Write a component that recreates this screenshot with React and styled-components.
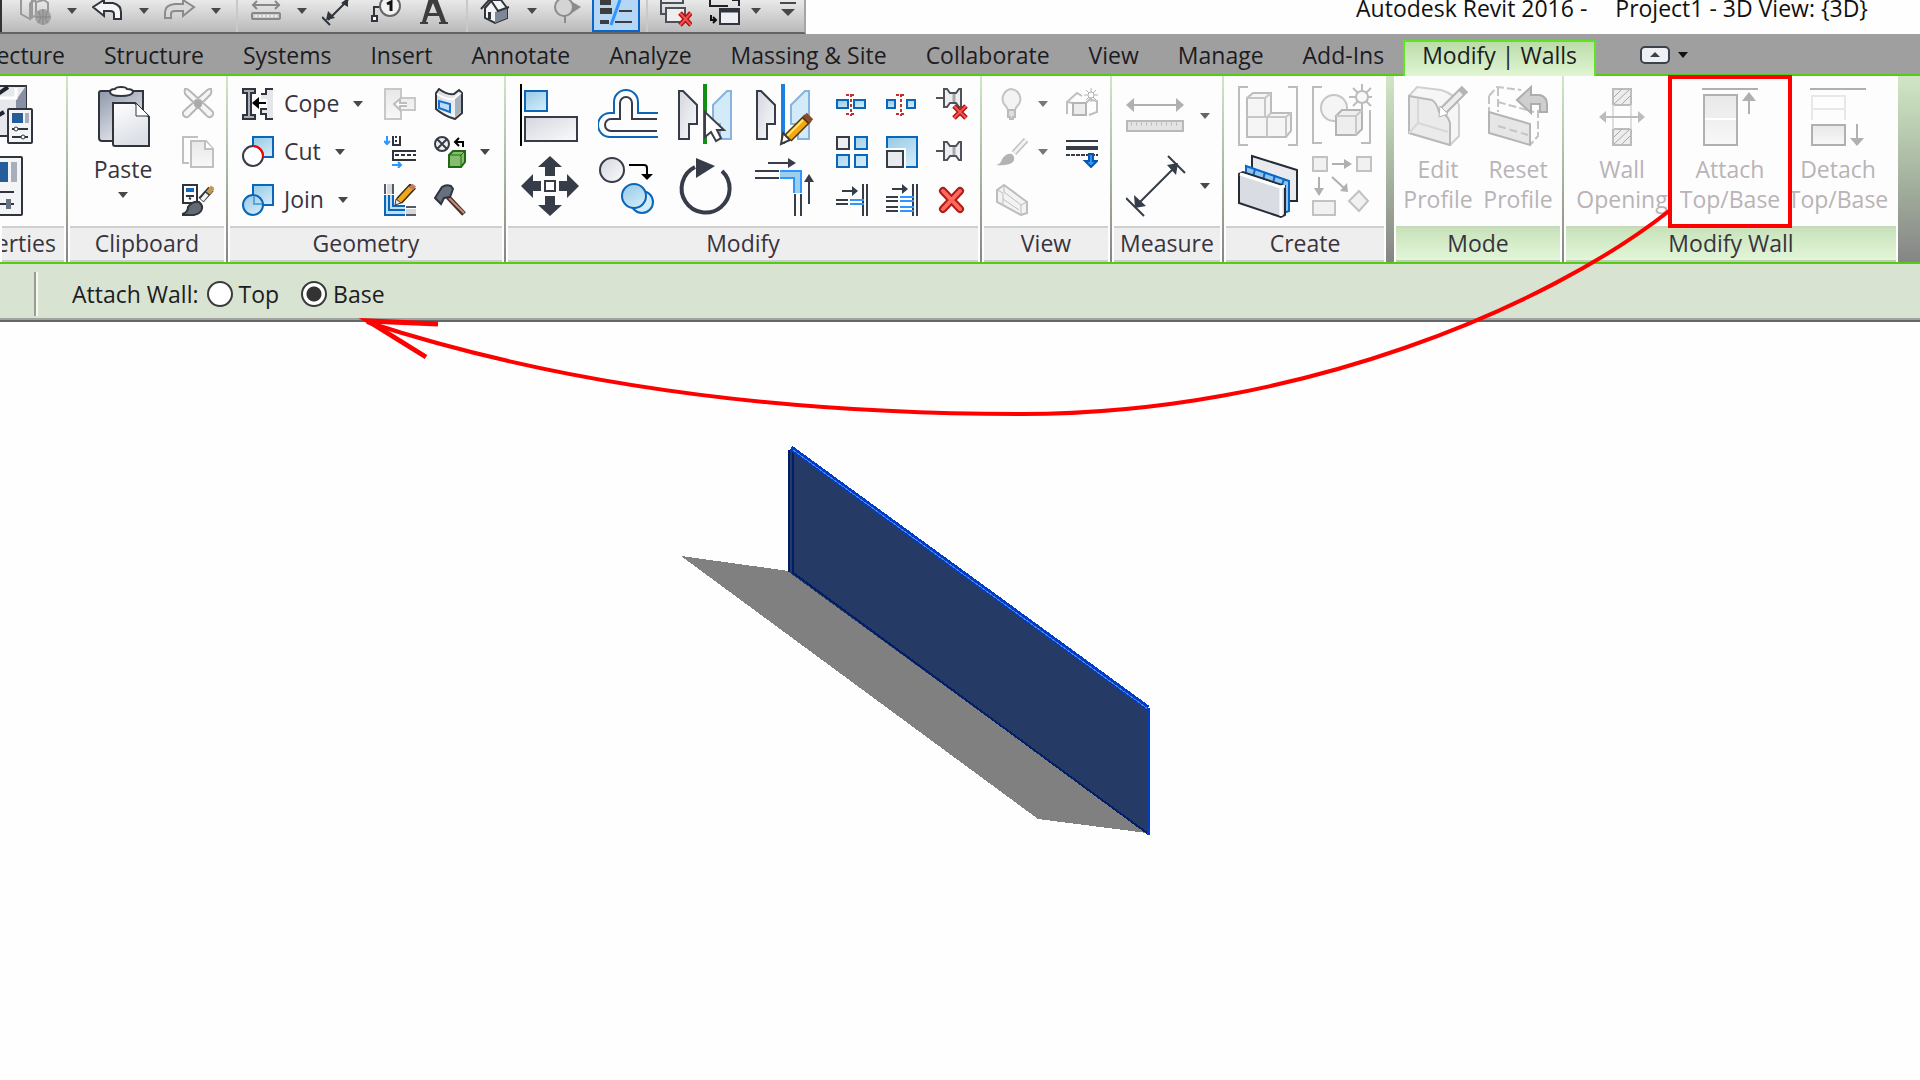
import { useState } from 'react';
import styled, { createGlobalStyle, css } from 'styled-components';

const GlobalStyle = createGlobalStyle`
  :root {
    --ink: #363c48;
    --blue: #0a66b8;
    --lime: #55cc14;
    --disabled: #b9b3b8;
    --options: #d8e3d1;
  }
  body {
    margin: 0;
    background: #fefefe;
    font-family: 'Open Sans', 'Noto Sans', sans-serif;
    font-size: 23px;
    line-height: 30px;
    color: #1c1c22;
    overflow-x: hidden;
  }
  button {
    font: inherit;
    color: inherit;
    background: none;
    border: 0;
    padding: 0;
  }
  svg {
    display: block;
    flex: none;
  }
`;

const Page = styled.div`
  position: relative;
  min-height: 100vh;
  overflow: hidden;
`;

const TopRow = styled.header`
  display: flex;
  justify-content: space-between;
  height: 34px;
`;

const QuickAccess = styled.div`
  display: flex;
  height: 32px;
  padding-left: 20px;
  background: linear-gradient(#e9e9e9, #b9b9b9);
  border-bottom: 2px solid #636363;
  border-right: 2px solid #a5a5a5;
  box-shadow: inset 2px 0 0 #333;
`;

const QuickButton = styled.button`
  display: flex;
  justify-content: center;
  width: ${(props) => props.$width || 32}px;
  height: 32px;
  margin-right: ${(props) => props.$after || 0}px;
  ${(props) =>
    props.$on &&
    css`
      box-sizing: border-box;
      background: #b5d6f5;
      border: 2px solid #0a66c8;
      border-top: 0;
    `}
`;

const QuickDivider = styled.div`
  width: 2px;
  margin: 0 12px 0 ${(props) => (props.$tight ? 6 : 0)}px;
  background: #c9c9c9;
`;

const WindowTitle = styled.div`
  display: flex;
  gap: 28px;
  padding-right: 52px;
  line-height: 16px;
  color: #111;
  white-space: nowrap;
`;

const TabBar = styled.nav`
  display: flex;
  align-items: flex-end;
  height: 40px;
  background: #9f9f9f;
  border-bottom: 2px solid var(--lime);
`;

const Tab = styled.button`
  box-sizing: border-box;
  height: 34px;
  padding: 0 19px 4px 20px;
  line-height: 30px;
  white-space: nowrap;
  ${(props) =>
    props.$clipped &&
    css`
      display: flex;
      justify-content: flex-end;
      width: 84px;
      overflow: hidden;
    `}
  ${(props) =>
    props.$active &&
    css`
      height: 36px;
      margin-bottom: -2px;
      padding: 0 17px 8px;
      background: linear-gradient(#bcdcaa, #e0f6d3);
      border: 2px solid #5fe51e;
      border-bottom: 0;
      line-height: 26px;
    `}
`;

const CollapseButton = styled.button`
  display: flex;
  align-items: center;
  gap: 8px;
  height: 38px;
  margin-left: 44px;
`;

const Ribbon = styled.section`
  display: flex;
  gap: 2px;
  height: 186px;
  background: linear-gradient(#d0e7c5, #a9b8a2 50%, #858585);
  border-bottom: 2px solid var(--lime);
`;

const PanelBox = styled.div`
  display: flex;
  flex-direction: column;
  flex: none;
  width: ${(props) => props.$width}px;
  margin-right: ${(props) => props.$after || 0}px;
  background: #fdfdfd;
`;

const PanelBody = styled.div`
  display: flex;
  justify-content: ${(props) => (props.$clipped ? 'flex-end' : 'flex-start')};
  box-sizing: border-box;
  height: 150px;
  padding: 8px 0 0 ${(props) => props.$left}px;
`;

const PanelTitle = styled.div`
  display: flex;
  justify-content: ${(props) => (props.$clipped ? 'flex-end' : 'center')};
  box-sizing: border-box;
  height: 36px;
  margin: 0 2px;
  padding-right: ${(props) => (props.$clipped ? 8 : 0)}px;
  overflow: hidden;
  line-height: 30px;
  color: #38343f;
  background: ${(props) =>
    props.$context ? 'linear-gradient(#c9e2bb, #e2f6d8)' : '#eeeeee'};
  border-top: 2px solid ${(props) => (props.$context ? '#c6d9bb' : '#cfcfcf')};
  border-bottom: 2px solid ${(props) => (props.$context ? '#bccbb3' : '#cccccc')};
`;

const SmallColumn = styled.div`
  display: flex;
  flex-direction: column;
  gap: 16px;
  width: ${(props) => props.$width || 32}px;
  margin-right: ${(props) => props.$after || 0}px;
  padding-top: 4px;
`;

const ToolButton = styled.button`
  display: flex;
  align-items: center;
  gap: ${(props) => props.$gap || 10}px;
  height: 32px;
  white-space: nowrap;
  color: #38343f;
  span {
    margin-right: 4px;
    padding-bottom: 2px;
  }
`;

const LargeGrid = styled.div`
  display: grid;
  grid-template-columns: repeat(${(props) => props.$columns}, 60px);
  grid-auto-rows: 64px;
  gap: 6px ${(props) => props.$gap || 14}px;
  margin-right: ${(props) => props.$after || 0}px;
`;

const WideButton = styled.button`
  display: flex;
  align-items: center;
  gap: 14px;
  height: 64px;
`;

const WideColumn = styled.div`
  display: flex;
  flex-direction: column;
  gap: 6px;
`;

const LabelButton = styled.button`
  display: flex;
  flex-direction: column;
  align-items: center;
  flex: none;
  height: 142px;
  width: ${(props) => props.$width}px;
  margin-right: ${(props) => props.$after || 0}px;
  color: ${(props) => (props.disabled ? 'var(--disabled)' : '#38343f')};
  span {
    white-space: nowrap;
  }
  svg + span {
    margin-top: 6px;
  }
  span + svg {
    margin-top: 8px;
  }
`;

const OptionsBar = styled.section`
  display: flex;
  align-items: center;
  box-sizing: border-box;
  height: 58px;
  padding-top: 4px;
  background: var(--options);
  border-bottom: 2px solid #666;
  box-shadow: inset 0 -2px 0 #a0a39e;
`;

const OptionsDivider = styled.div`
  width: 2px;
  height: 44px;
  margin: 0 34px 0 34px;
  background: #979c94;
  border-right: 2px solid #f4f7f2;
`;

const OptionsLabel = styled.span`
  margin-right: 8px;
  white-space: nowrap;
`;

const RadioLabel = styled.label`
  display: flex;
  align-items: center;
  gap: 6px;
  margin-right: 22px;
  input {
    appearance: none;
    box-sizing: border-box;
    width: 26px;
    height: 26px;
    margin: 0;
    background: #fff;
    border: 2px solid #3a3a3a;
    border-radius: 50%;
  }
  input:checked {
    background: radial-gradient(circle, #333 0 7px, #fff 8px);
  }
`;

const Scene = styled.svg`
  width: 100%;
  height: auto;
`;

const Markup = styled.svg`
  position: absolute;
  top: 0;
  left: 0;
  width: 100%;
  height: auto;
  pointer-events: none;
`;

function Icon({ w = 32, h = 32, children }) {
  return (
    <svg width={w} height={h} viewBox={`0 0 ${w} ${h}`} fill="none" aria-hidden="true">
      {children}
    </svg>
  );
}

const Caret = ({ color = '#484848' }) => (
  <Icon w={10} h={6}>
    <path d="M0 0h10L5 6z" fill={color} />
  </Icon>
);

const DefsSvg = styled.svg`
  position: absolute;
`;

const Gradients = () => (
  <DefsSvg width="0" height="0" aria-hidden="true">
    <defs>
      <linearGradient id="steel" x1="0" y1="0" x2="0.6" y2="1">
        <stop offset="0" stopColor="#8e98aa" />
        <stop offset="1" stopColor="#e8eaef" />
      </linearGradient>
      <linearGradient id="paper" x1="0" y1="0" x2="0.4" y2="1">
        <stop offset="0" stopColor="#ffffff" />
        <stop offset="1" stopColor="#dcdfe6" />
      </linearGradient>
      <linearGradient id="silver" x1="0" y1="0" x2="1" y2="1">
        <stop offset="0" stopColor="#d3d6dd" />
        <stop offset="1" stopColor="#fbfbfc" />
      </linearGradient>
      <linearGradient id="sky" x1="0" y1="0" x2="0.6" y2="1">
        <stop offset="0" stopColor="#95c9e6" />
        <stop offset="1" stopColor="#cde9f8" />
      </linearGradient>
      <linearGradient id="haze" x1="0" y1="0" x2="0" y2="1">
        <stop offset="0" stopColor="#e8e8e8" />
        <stop offset="1" stopColor="#f8f8f8" />
      </linearGradient>
    </defs>
  </DefsSvg>
);

/* quick access icons, cut off by the top edge of the window */

const SyncIcon = () => (
  <Icon>
    <path d="M1 0v14l9 5V3M10 19l6-4M10 3l6-3M12 0v18M16 15V2l8-2M24 0l4 3v8" stroke="#9a9a9a" strokeWidth="2" />
    <circle cx="23" cy="17" r="8" fill="#a2a2a2" />
    <path d="M15 17h16M23 9v16M18 11c3 4 3 9 0 12M28 11c-3 4-3 9 0 12" stroke="#858585" />
  </Icon>
);

const UndoIcon = ({ redo }) => (
  <Icon>
    <path
      d={redo ? 'M30 7 19 0v4h-8Q1 5 1 12v6h6v-4q0-3 4-3h8v5z' : 'M1 7 12 0v3h9q8 2 8 9v7h-7v-5q0-3-4-3h-6v5z'}
      fill={redo ? '#d9d9d9' : '#f4f5f8'}
      stroke={redo ? '#8b8b8b' : '#30343d'}
      strokeWidth="2"
    />
  </Icon>
);

const RulerIcon = () => (
  <Icon>
    <path d="M2 5h28M7 1 3 5l4 4M25 1l4 4-4 4" stroke="#888" strokeWidth="2" />
    <rect x="2" y="13" width="28" height="6" rx="1" fill="#ccc" stroke="#888" strokeWidth="2" />
    <path d="M5 16h23" stroke="#eee" strokeWidth="2" strokeDasharray="2 2" />
  </Icon>
);

const DimensionIcon = () => (
  <Icon>
    <path d="m6 20 20-20M0 17l8 8" stroke="#30343d" strokeWidth="2" />
    <path d="m4 20 2-9 7 7zM19 3l7-5v9z" fill="#30343d" />
  </Icon>
);

const TagIcon = () => (
  <Icon>
    <path d="M4 16V7h8" stroke="#30343d" strokeWidth="2" />
    <rect x="2" y="16" width="5" height="5" fill="#fff" stroke="#30343d" strokeWidth="2" />
    <circle cx="20" cy="6" r="10" fill="#f2f2f2" stroke="#666" strokeWidth="2" />
    <path d="m17 4 4-2v9" stroke="#111" strokeWidth="3" />
  </Icon>
);

const TextIcon = () => (
  <Icon>
    <path d="M11-2h8l9 24h2v2h-9v-2h2l-2-6H10l-2 6h2v2H2v-2h2zM15 3l-4 10h8z" fill="#3d3d3d" fillRule="evenodd" />
  </Icon>
);

const HomeIcon = () => (
  <Icon>
    <path d="M5 8v10l10 5 12-5V8L21 0h-9z" fill="#f3f4f6" stroke="#30343d" strokeWidth="2" />
    <path d="M15 12v11l12-5V8z" fill="#7e8795" />
    <path d="M1 9 10-1l8 12 11-4" stroke="#30343d" strokeWidth="2" />
    <path d="M8 12h3v7H8z" fill="#30343d" />
  </Icon>
);

const SectionIcon = () => (
  <Icon>
    <path d="M17 0 29 7 17 15z" fill="#8b8b8b" />
    <circle cx="12" cy="7" r="9" fill="#d4d4d4" stroke="#8b8b8b" strokeWidth="2" />
    <path d="M13 16v7" stroke="#8b8b8b" strokeWidth="2" />
  </Icon>
);

const ThinLinesIcon = () => (
  <Icon>
    <path d="M0 2h11M0 11h12" stroke="#3d3d3d" strokeWidth="6" />
    <path d="M0 22h9" stroke="#3d3d3d" strokeWidth="4" />
    <path d="M19 11h13M15 22h17" stroke="#3d3d3d" strokeWidth="2" />
    <path d="m20 0-9 25" stroke="#2f95ff" strokeWidth="3" />
  </Icon>
);

const CloseHiddenIcon = () => (
  <Icon>
    <path d="M1 0v14h6M1 3h22V0" fill="none" stroke="#4c505a" strokeWidth="2" />
    <rect x="6" y="8" width="19" height="14" fill="#eee" stroke="#4c505a" strokeWidth="2" />
    <path d="m20 13 11 12M31 13 20 25" stroke="#b31313" strokeWidth="5" />
    <path d="m20 13 11 12M31 13 20 25" stroke="#ef5350" strokeWidth="2" />
  </Icon>
);

const SwitchWindowsIcon = () => (
  <Icon>
    <path d="M2 0v6h18M24 0h7v6" stroke="#222" strokeWidth="2" />
    <rect x="12" y="9" width="19" height="15" fill="#eeeff2" stroke="#30343d" strokeWidth="2" />
    <path d="M12 11h19" stroke="#30343d" strokeWidth="3" />
    <path d="M3 15v5h5M5 17l3 3-3 3" stroke="#111" strokeWidth="2" />
  </Icon>
);

const CustomizeIcon = () => (
  <Icon>
    <path d="M8 3h16" stroke="#484848" strokeWidth="2" />
    <path d="M9 9h14l-7 7z" fill="#484848" />
  </Icon>
);

/* ribbon icons */

const PropertiesIcon = () => (
  <Icon w={60} h={64}>
    <path d="M4 14 26 2h26v36l-10 14H4z" fill="#e6e8ec" stroke="#30343d" strokeWidth="2" />
    <path d="M52 2 42 16v30l10-12z" fill="#8791a3" />
    <path d="M4 14h38V4" stroke="#fff" strokeWidth="3" />
    <path d="m24 10 10-7M20 34l10-6" stroke="#20242c" strokeWidth="4" />
    <rect x="34" y="25" width="24" height="34" rx="1" fill="#f3f4f6" stroke="#30343d" strokeWidth="2" />
    <path d="M38 29h11v10H38z" fill="#245c9c" />
    <path d="M51 29h4v10h-4z" fill="#a9afba" />
    <path d="M38 45h16M38 53h16" stroke="#30343d" strokeWidth="2" />
    <circle cx="42" cy="45" r="2" fill="#fff" stroke="#30343d" />
    <circle cx="49" cy="53" r="2" fill="#fff" stroke="#30343d" />
  </Icon>
);

const TypePropertiesIcon = () => (
  <Icon w={60} h={64}>
    <rect x="6" y="3" width="42" height="58" rx="1" fill="#f3f4f6" stroke="#30343d" strokeWidth="2" />
    <path d="M12 8h22v20H12z" fill="#245c9c" />
    <path d="M37 8h6v20h-6z" fill="#a9afba" />
    <path d="M12 38h28M12 50h28" stroke="#30343d" strokeWidth="2" />
    <path d="M32 45h5v10h-5z" fill="#687386" />
  </Icon>
);

const PasteIcon = () => (
  <Icon w={60} h={64}>
    <path d="M8 7h42v47q-1 3-3 3H9q-3 0-3-3V9q0-2 2-2z" fill="url(#steel)" stroke="#30343d" strokeWidth="2" />
    <path d="M17 8q0-3 5-3 1-2 6-2t6 2q6 0 6 3-1 4-12 4T17 8z" fill="#fff" stroke="#30343d" strokeWidth="2" />
    <path d="M20 19h22l14 14v29H22q-2 0-2-2z" fill="url(#paper)" stroke="#30343d" strokeWidth="2" />
    <path d="M43 19v13h13z" fill="#fff" stroke="#30343d" strokeWidth="1" />
  </Icon>
);

const ScissorsIcon = () => (
  <Icon>
    <path d="M3 1q-1 4 1 6l20 20q3 4 6 1t-1-6L9 4Q5 0 3 1zM29 1q1 4-1 6L8 27q-3 4-6 1t1-6L23 4q4-4 6-3z" fill="#f5f5f5" stroke="#b7b7b7" strokeWidth="2" />
    <circle cx="16" cy="16" r="4" fill="#aaa" />
  </Icon>
);

const CopyIcon = () => (
  <Icon>
    <path d="M16 1H1v26h6" stroke="#c0c0c0" strokeWidth="2" />
    <path d="M9 5h15l7 8v18H9z" fill="url(#haze)" stroke="#c0c0c0" strokeWidth="2" />
    <path d="M23 5v8h8" fill="#fff" stroke="#c0c0c0" strokeWidth="2" />
  </Icon>
);

const MatchIcon = () => (
  <Icon>
    <rect x="1" y="1" width="14" height="18" fill="#fff" stroke="#30343d" strokeWidth="2" />
    <path d="M4 4h8v4H4z" fill="#1567c0" />
    <path d="M4 12h8M7 14l2 1" stroke="#30343d" strokeWidth="2" />
    <path d="m29 5-10 11" stroke="#30343d" strokeWidth="7" />
    <path d="m31 3-5 6" stroke="#c29a52" strokeWidth="5" />
    <path d="m25 10-5 6" stroke="#f4f4f4" strokeWidth="4" />
    <path d="M0 30q6-1 6-7 4-6 11-5 5 4 2 9-4 5-12 4H0z" fill="#646a74" stroke="#30343d" strokeWidth="2" />
  </Icon>
);

const CopeIcon = () => (
  <Icon>
    <path d="M1 1h12v4H9v22h4v4H1v-4h4V5H1z" fill="#aab0ba" stroke="#30343d" strokeWidth="2" />
    <path d="M31 1h-7v5h-5v5h6v10h-6v5h5v5h7z" fill="#e4e6ea" />
    <path d="M31 1h-7v5h-5M25 21h-6v5h5v5h7" stroke="#30343d" strokeWidth="2" />
    <path d="M12 15h12" stroke="#000" strokeWidth="2" />
    <path d="m10 15 7-6v12z" fill="#000" />
  </Icon>
);

const CutIcon = () => (
  <Icon>
    <rect x="11" y="1" width="20" height="20" fill="url(#sky)" stroke="var(--blue)" strokeWidth="2" />
    <circle cx="11" cy="20" r="10" fill="#fff" stroke="var(--ink)" strokeWidth="2" />
    <path d="M11 10a10 10 0 0 1 10 11" stroke="#f00" strokeWidth="2" />
  </Icon>
);

const JoinIcon = () => (
  <Icon>
    <rect x="11" y="1" width="20" height="20" fill="url(#sky)" stroke="var(--blue)" strokeWidth="2" />
    <circle cx="11" cy="21" r="10" fill="url(#sky)" stroke="var(--blue)" strokeWidth="2" />
    <path d="M12 12v8h8" stroke="#5ea4d2" strokeWidth="2" />
  </Icon>
);

const UnjoinIcon = () => (
  <Icon>
    <path d="M1 1h16v9h14v12H17v9H1z" fill="url(#haze)" stroke="#c8c8c8" strokeWidth="2" />
    <path d="M23 15h-7v-4l-6 5 6 6v-4h7" fill="#fff" stroke="#bdbdbd" strokeWidth="2" />
  </Icon>
);

const SplitFaceIcon = () => (
  <Icon>
    <path d="m2 5 3-4q8 6 15 5l5-4 3 3v20l-7 6Q10 28 2 21z" fill="url(#silver)" stroke="#30343d" strokeWidth="2" />
    <path d="M3 6q9 6 17 5l7-6" stroke="#fff" strokeWidth="2" />
    <path d="M21 11v18l6-5V6z" fill="#aab1bd" />
    <path d="M5 13v7l11 4v-8z" fill="#bcdcf5" stroke="#1770cc" strokeWidth="2" />
  </Icon>
);

const BeamJoinIcon = () => (
  <Icon>
    <path d="M3 0v8M0 5l3 3 3-3M8 29h9M14 26l3 3-3 3" stroke="#2f95ff" strokeWidth="2" />
    <path d="M9 0v9h7V0" stroke="#30343d" strokeWidth="2" />
    <path d="M12 0v7" stroke="#30343d" strokeWidth="2" strokeDasharray="2 2" />
    <path d="M32 15H9v9h23" stroke="#30343d" strokeWidth="2" />
    <path d="M11 19h21" stroke="#30343d" strokeWidth="2" strokeDasharray="4 2" />
  </Icon>
);

const PaintIcon = () => (
  <Icon>
    <circle cx="8" cy="8" r="7" fill="#eee" stroke="var(--ink)" strokeWidth="2" />
    <path d="m3 3 10 10M13 3 3 13" stroke="var(--ink)" strokeWidth="2" />
    <path d="M29 11V6h-7M25 2l-4 4 4 4" stroke="#000" strokeWidth="2" />
    <path d="m15 19 4-4h12v11l-4 5H15z" fill="#86bd6c" stroke="#1f6a12" strokeWidth="2" />
    <path d="M15 19h12v12M27 19l4-4" stroke="#1f6a12" strokeWidth="1" />
  </Icon>
);

const Pencil = () => (
  <>
    <path d="m29 2-14 15" stroke="#3a2a10" strokeWidth="8" />
    <path d="m27 4-12 13" stroke="#f0a818" strokeWidth="5" />
    <path d="m30 1-3 4" stroke="#c37c63" strokeWidth="5" />
    <path d="m12 15 5 4-6 2z" fill="#eee" stroke="#3a3a3a" />
  </>
);

const WallJoinIcon = () => (
  <Icon>
    <path d="M3 0h5v10H3zM22 25h10v5H22z" fill="#d4d7dc" />
    <path d="M1 0v10M9 0v10M22 23h10M22 31h10" stroke="#555b66" strokeWidth="2" />
    <path d="M1 11v20h20V22H9V11z" fill="#bfe0f3" />
    <path d="M1 11v20h20M5 11v15h16M9 11v11h12" stroke="#0b66b9" strokeWidth="2" />
    <Pencil />
  </Icon>
);

const HammerIcon = () => (
  <Icon>
    <path d="m14 13 16 17" stroke="#4a302a" strokeWidth="5" />
    <path d="m15 14 15 15" stroke="#c58f7e" strokeWidth="2" />
    <path d="M1 14 8 3q4-3 9-1l2 3-3 8-6 1-3 6z" fill="#66707e" stroke="#30343d" strokeWidth="2" />
  </Icon>
);

const AlignIcon = () => (
  <Icon w={60} h={64}>
    <path d="M1 0v62" stroke="#000" strokeWidth="2" />
    <rect x="5" y="7" width="22" height="20" fill="url(#sky)" stroke="var(--blue)" strokeWidth="2" />
    <rect x="5" y="33" width="52" height="24" fill="url(#silver)" stroke="var(--ink)" strokeWidth="2" />
  </Icon>
);

const OffsetIcon = () => (
  <Icon w={60} h={64}>
    <path d="M60 29H40V18a12 12 0 0 0-24 0v11h-4a12 12 0 0 0 0 24h48" stroke="var(--blue)" strokeWidth="2" />
    <path d="M59 35H34V19a6 6 0 0 0-12 0v16h-9a6 6 0 0 0 0 12h46" stroke="var(--ink)" strokeWidth="2" />
  </Icon>
);

const MirrorShapes = ({ axis }) => (
  <>
    <path d="M3 7h4l14 14v19h-8v15H3z" fill="url(#silver)" stroke="var(--ink)" strokeWidth="2" />
    <path d="M55 7h-4L37 21v19h7v15h11z" fill="#d3eaf8" stroke="#86b4de" strokeWidth="2" />
    <path d="M29 0v60" stroke={axis} strokeWidth="4" />
  </>
);

const MirrorPickIcon = () => (
  <Icon w={60} h={64}>
    <MirrorShapes axis="#109010" />
    <path d="M29 28v25l6-5 5 9 5-3-4-8h7z" fill="#fff" stroke="#3c4048" strokeWidth="2" />
  </Icon>
);

const MirrorDrawIcon = () => (
  <Icon w={60} h={64}>
    <MirrorShapes axis="#1d80e0" />
    <path d="M54 34 34 54" stroke="#4c3312" strokeWidth="10" />
    <path d="M51 37 34 54" stroke="#f3aa10" strokeWidth="7" />
    <path d="M49 36 32 53" stroke="#ffe477" strokeWidth="2" />
    <path d="m56 32-4 4" stroke="#8a4b2c" strokeWidth="9" />
    <path d="m29 49 7 7-9 4z" fill="#fff" stroke="#3a3a3a" strokeWidth="2" />
  </Icon>
);

const MoveIcon = () => (
  <Icon w={60} h={64}>
    <path
      d="m30 2 12 11h-7v9H25v-9h-7zM30 62 18 51h7v-9h10v9h7zM1 32l12-12v7h8v10h-8v7zM59 32 47 20v7h-8v10h8v7z"
      fill="var(--ink)"
    />
    <rect x="25" y="27" width="10" height="10" fill="#fff" stroke="var(--ink)" strokeWidth="2" />
  </Icon>
);

const CopyElementIcon = () => (
  <Icon w={60} h={64}>
    <circle cx="14" cy="16" r="12" fill="url(#silver)" stroke="var(--ink)" strokeWidth="2" />
    <path d="M31 11h15q3 0 3 3v7" stroke="#000" strokeWidth="2" />
    <path d="M43 20h12l-6 6z" fill="#000" />
    <circle cx="44" cy="48" r="11" fill="#d3ecf9" stroke="var(--blue)" strokeWidth="2" />
    <circle cx="36" cy="42" r="12" fill="url(#sky)" stroke="var(--blue)" strokeWidth="2" />
  </Icon>
);

const RotateIcon = () => (
  <Icon w={60} h={64}>
    <path d="M46 17A24 24 0 1 1 19 13" stroke="var(--ink)" strokeWidth="4" />
    <path d="m20 4 19 8-19 12z" fill="var(--ink)" />
  </Icon>
);

const TrimCornerIcon = () => (
  <Icon w={60} h={64}>
    <path d="M14 9h24M55 50V26" stroke="var(--ink)" strokeWidth="2" />
    <path d="m34 4 8 5-8 5zM50 28l5-8 5 8z" fill="var(--ink)" />
    <path d="M1 17h24M1 24h24M41 40v22M47 40v22" stroke="var(--ink)" strokeWidth="2" />
    <path d="M26 17h21v22h-7V24H26z" fill="#9dceea" />
    <path d="M26 17h21v22M26 24h14v15" stroke="#2f95ff" strokeWidth="2" />
  </Icon>
);

const SplitIcon = ({ gap }) => (
  <Icon>
    {gap ? (
      <path d="M1 12h8v8H1zM21 12h8v8h-8z" fill="url(#sky)" stroke="var(--blue)" strokeWidth="2" />
    ) : (
      <path d="M1 12h11v8H1zM18 12h11v8H18z" fill="url(#sky)" stroke="var(--blue)" strokeWidth="2" />
    )}
    <path d="M15 6v22M10 7h10M10 26h10" stroke="#c22f2f" strokeWidth="2" strokeDasharray="3 2" />
  </Icon>
);

const Pin = () => (
  <>
    <path d="M0 15h8" stroke="#4e525b" strokeWidth="2" />
    <path d="M8 6h3l3 4h6l3-4h2v18h-2l-3-4h-6l-3 4H8z" fill="#eee" stroke="#4e525b" strokeWidth="2" />
    <path d="M18 11v8" stroke="#a4a8b0" strokeWidth="3" />
  </>
);

const PinIcon = () => (
  <Icon>
    <Pin />
  </Icon>
);

const UnpinIcon = () => (
  <Icon>
    <g transform="translate(0 -5)">
      <Pin />
    </g>
    <path d="m18 18 12 12M30 18 18 30" stroke="#b31313" strokeWidth="5" />
    <path d="m18 18 12 12M30 18 18 30" stroke="#ef5b50" strokeWidth="2" />
  </Icon>
);

const ArrayIcon = () => (
  <Icon>
    <rect x="1" y="1" width="12" height="12" fill="#eee" stroke="var(--ink)" strokeWidth="2" />
    <path d="M19 1h12v12H19zM1 19h12v12H1zM19 19h12v12H19z" fill="url(#sky)" stroke="var(--blue)" strokeWidth="2" />
  </Icon>
);

const ScaleIcon = () => (
  <Icon>
    <path d="M1 1h30v30H20V12H1z" fill="url(#sky)" stroke="none" />
    <path d="M1 12V1h30v30H20" stroke="var(--blue)" strokeWidth="2" />
    <rect x="1" y="15" width="16" height="16" fill="#e9eaee" stroke="var(--ink)" strokeWidth="2" />
  </Icon>
);

const ExtendIcon = ({ many }) => (
  <Icon>
    <path d={many ? 'M6 5h15' : 'M6 7h15'} stroke="var(--ink)" strokeWidth="2" />
    <path d={many ? 'm16 0 6 5-6 5z' : 'm16 2 6 5-6 5z'} fill="var(--ink)" />
    <path d="M27 0v32M31 0v32" stroke="var(--ink)" strokeWidth="2" />
    {many ? (
      <>
        <path d="M0 13h12M0 17h12M0 23h12M0 27h12" stroke="var(--ink)" strokeWidth="2" />
        <path d="M14 13h14M14 17h14M14 23h14M14 27h14" stroke="#2f95ff" strokeWidth="2" />
      </>
    ) : (
      <>
        <path d="M0 16h12M0 20h12" stroke="var(--ink)" strokeWidth="2" />
        <path d="M14 16h14M14 20h14" stroke="#2f95ff" strokeWidth="2" />
      </>
    )}
  </Icon>
);

const DeleteIcon = () => (
  <Icon>
    <path d="m7 7 17 18M24 7 7 25" stroke="#b01c1c" strokeWidth="8" strokeLinecap="round" />
    <path d="m7 7 17 18M24 7 7 25" stroke="#ff6a5c" strokeWidth="4" strokeLinecap="round" />
  </Icon>
);

const BulbIcon = () => (
  <Icon>
    <path d="M12 22q-1-3-4-6A10 10 0 0 1 15 1a10 10 0 0 1 8 15q-3 3-4 6z" fill="#f3f3f3" stroke="#c4c4c4" strokeWidth="2" />
    <path d="M12 22h7v7h-2v2h-3v-2h-2z" fill="#ddd" stroke="#bbb" strokeWidth="2" />
  </Icon>
);

const DisplaceIcon = () => (
  <Icon>
    <path d="M1 26V14l10-9 5 3M1 14l6 1M25 12l6 1v11l-8 3M20 15l5-5" stroke="#c0c0c0" strokeWidth="2" />
    <rect x="7" y="15" width="13" height="12" fill="#ececec" stroke="#b4b4b4" strokeWidth="2" />
    <path d="M25 0v14M18 7h14M20 2l10 10M30 2 20 12" stroke="#b4b4b4" strokeWidth="1" />
    <circle cx="25" cy="7" r="3" fill="#fff" stroke="#b4b4b4" />
  </Icon>
);

const BrushIcon = () => (
  <Icon>
    <path d="M30 4 18 17" stroke="#c0c0c0" strokeWidth="6" />
    <path d="M30 4 18 17" stroke="#f2f2f2" strokeWidth="3" />
    <path d="M0 29q5-1 6-6 4-6 10-5 4 4 1 8-5 4-17 3z" fill="#b3b3b3" />
  </Icon>
);

const LineworkIcon = () => (
  <Icon>
    <path d="M0 5h32" stroke="var(--ink)" strokeWidth="2" />
    <path d="M0 12h32" stroke="var(--ink)" strokeWidth="4" />
    <path d="M0 19h32" stroke="var(--ink)" strokeWidth="2" strokeDasharray="4 1" />
    <path d="M23 18h4v7h4l-6 6-6-6h4z" fill="#2f95ff" stroke="#0a57a8" strokeWidth="2" />
  </Icon>
);

const SectionBoxIcon = () => (
  <Icon>
    <path d="m1 6 7-5 23 17v11l-6 2L1 18z" fill="#f3f3f3" stroke="#bdbdbd" strokeWidth="2" />
    <path d="m1 6 6 3v11M8 1v7l17 13 6-3M25 21v10M7 15l16 11" stroke="#bdbdbd" strokeWidth="1" />
  </Icon>
);

const MeasureIcon = () => (
  <Icon w={60} h={64}>
    <path d="M6 21h48" stroke="#b0b0b0" strokeWidth="2" />
    <path d="m0 21 8-7v14zM58 21l-8-7v14z" fill="#b0b0b0" />
    <rect x="1" y="37" width="56" height="10" fill="#e3e3e3" stroke="#b9b9b9" strokeWidth="2" />
    <path d="M5 40h50" stroke="#b9b9b9" strokeWidth="3" strokeDasharray="1 4" />
  </Icon>
);

const AlignedDimensionIcon = () => (
  <Icon w={60} h={64}>
    <path d="M10 52 50 12M0 44l18 18M42 2l17 17" stroke="var(--ink)" strokeWidth="2" />
    <path d="m8 41 12 11-11 2zM41 11l11-2-2 12z" fill="var(--ink)" />
  </Icon>
);

const GroupIcon = () => (
  <Icon w={60} h={64}>
    <path d="M10 3H1v58h9M50 3h9v58h-9" stroke="#bcbcbc" strokeWidth="2" />
    <path d="M9 33V14l6-5h18v20h20v18l-5 6H9z" fill="#f5f5f5" stroke="#bcbcbc" strokeWidth="2" />
    <path d="M9 14h18l6-5M27 14v19M9 33h20v20M29 33h19l5-4M48 33v19M29 33l4-4" stroke="#c6c6c6" strokeWidth="2" />
  </Icon>
);

const CreateSimilarIcon = () => (
  <Icon w={60} h={64}>
    <path d="M10 3H1v56h9M58 26v33h-9" stroke="#bcbcbc" strokeWidth="2" />
    <circle cx="22" cy="24" r="13" fill="#f5f5f5" stroke="#c6c6c6" strokeWidth="2" />
    <path d="M24 32l6-6h20v19l-6 6H24z" fill="#eeeeee" stroke="#b4b4b4" strokeWidth="2" />
    <path d="M24 32h20v19M44 32l6-6" stroke="#c9c9c9" strokeWidth="2" />
    <path d="M50 0v26M37 13h26M41 4l18 18M59 4 41 22" stroke="#bcbcbc" strokeWidth="2" />
    <circle cx="50" cy="13" r="6" fill="#f8f8f8" stroke="#bcbcbc" strokeWidth="2" />
  </Icon>
);

const AssemblyIcon = () => (
  <Icon w={60} h={64}>
    <g transform="translate(-1 0)">
      <path d="m15 2 45 14v31h-7L15 35z" fill="#e8eaee" stroke="#262c36" strokeWidth="2" />
      <path d="m9 12 43 15v30l-5 2-38-12z" fill="#8dc4ee" stroke="#0a66c8" strokeWidth="2" />
      <path d="m18 15-2 8M28 18l-2 8M38 21l-2 8M47 25l-2 6" stroke="#0a66c8" strokeWidth="2" />
      <path d="m2 20 4-2 42 14v29l-4 2L2 49z" fill="#d9dce3" stroke="#262c36" strokeWidth="2" />
      <path d="m3 20 40 13 5-1M44 34v28" stroke="#fff" strokeWidth="3" />
    </g>
  </Icon>
);

const PartsIcon = () => (
  <Icon w={60} h={64}>
    <path d="M1 3h14v14H1zM45 3h14v14H45zM1 47h22v14H1zM47 37l9 10-9 10-10-10z" fill="#f1f1f1" stroke="#c2c2c2" strokeWidth="2" />
    <path d="M20 10h14M7 23v14M20 23l12 11" stroke="#b0b0b0" strokeWidth="2" />
    <path d="m32 5 8 5-8 5zM2 34h10l-5 8zM28 37l8 1-1-9z" fill="#b0b0b0" />
  </Icon>
);

const EditProfileIcon = () => (
  <Icon w={60} h={64}>
    <path d="m1 12 8-9 24 3q14 4 18 15v31l-9 9L1 49z" fill="#f6f6f6" stroke="#d0d0d0" strokeWidth="2" />
    <path d="M1 12 24 16q5 3 7 12 9 2 11 11v22L1 49z" fill="#ebebeb" stroke="#b9b9b9" strokeWidth="2" />
    <path d="M10 15v24l30 9M10 39l-9 10" stroke="#d8d8d8" strokeWidth="2" />
    <path d="M57 5 36 26" stroke="#b4b4b4" strokeWidth="9" />
    <path d="M53 9 36 26" stroke="#ededed" strokeWidth="5" />
    <path d="m32 22 8 8-9 3z" fill="#fff" stroke="#b4b4b4" />
  </Icon>
);

const ResetProfileIcon = () => (
  <Icon w={60} h={64}>
    <path d="m1 12 8-9 24 3M1 12v16M10 4v24M50 26v26l-8 9M10 18l36 10" stroke="#c4c4c4" strokeWidth="2" strokeDasharray="8 3" />
    <path d="m1 28 41 12v21L1 49z" fill="#e6e6e6" stroke="#b4b4b4" strokeWidth="2" />
    <path d="m10 42 30 9" stroke="#c4c4c4" strokeWidth="2" strokeDasharray="8 4" />
    <path d="m29 16 14-13v8h9q7 2 7 9v8h-7v-8h-9v9z" fill="#cfcfcf" stroke="#adadad" strokeWidth="2" />
  </Icon>
);

const OpeningIcon = () => (
  <Icon w={60} h={64}>
    <path d="M21 5h18v16H21zM21 45h18v16H21z" fill="#ededed" stroke="#bcbcbc" strokeWidth="2" />
    <path d="m22 13 8-8M22 20 37 6M30 20l8-8M22 53l8-8M22 60l15-14M30 60l8-8" stroke="#a9a9a9" />
    <path d="M21 21v24M39 21v24" stroke="#dedede" strokeWidth="2" />
    <path d="M10 33h40" stroke="#bcbcbc" strokeWidth="2" />
    <path d="m7 33 7-6v12zM53 33l-7-6v12z" fill="#bcbcbc" />
  </Icon>
);

const AttachIcon = () => (
  <Icon w={60} h={64}>
    <path d="M2 5h56" stroke="#b0b0b0" strokeWidth="2" />
    <rect x="4" y="11" width="33" height="50" fill="url(#haze)" stroke="#b0b0b0" strokeWidth="2" />
    <path d="M5 35h31" stroke="#fff" strokeWidth="2" />
    <path d="M49 30V14" stroke="#b0b0b0" strokeWidth="2" />
    <path d="m42 17 7-9 7 9z" fill="#b0b0b0" />
  </Icon>
);

const DetachIcon = () => (
  <Icon w={60} h={64}>
    <path d="M2 5h56" stroke="#b0b0b0" strokeWidth="2" />
    <path d="M4 24V12h33v12M4 36V25h33v11" stroke="#e8e8e8" strokeWidth="2" />
    <rect x="4" y="41" width="33" height="20" fill="url(#haze)" stroke="#b0b0b0" strokeWidth="2" />
    <path d="M49 40v16" stroke="#b0b0b0" strokeWidth="2" />
    <path d="m42 54 7 8 7-8z" fill="#b0b0b0" />
  </Icon>
);

function Panel({ title, width, left, after, context, clipped, children }) {
  return (
    <PanelBox $width={width} $after={after}>
      <PanelBody $left={left} $clipped={clipped}>
        {children}
      </PanelBody>
      <PanelTitle $context={context} $clipped={clipped}>
        {title}
      </PanelTitle>
    </PanelBox>
  );
}

function QuickCaret({ width = 40, name }) {
  return (
    <QuickButton $width={width} aria-label={name}>
      <Icon w={10}>
        <path d="M0 8h10l-5 6z" fill="#484848" />
      </Icon>
    </QuickButton>
  );
}

function QuickAccessBar() {
  return (
    <QuickAccess>
      <QuickButton aria-label="Synchronize"><SyncIcon /></QuickButton>
      <QuickCaret name="Synchronize options" />
      <QuickButton aria-label="Undo"><UndoIcon /></QuickButton>
      <QuickCaret name="Undo history" />
      <QuickButton aria-label="Redo"><UndoIcon redo /></QuickButton>
      <QuickCaret name="Redo history" />
      <QuickDivider />
      <QuickButton aria-label="Measure"><RulerIcon /></QuickButton>
      <QuickCaret name="Measure options" />
      <QuickButton $after={16} aria-label="Aligned dimension"><DimensionIcon /></QuickButton>
      <QuickButton $after={16} aria-label="Tag by category"><TagIcon /></QuickButton>
      <QuickButton $after={16} aria-label="Text"><TextIcon /></QuickButton>
      <QuickDivider />
      <QuickButton aria-label="Default 3D view"><HomeIcon /></QuickButton>
      <QuickCaret name="3D view options" />
      <QuickButton $after={8} aria-label="Section"><SectionIcon /></QuickButton>
      <QuickButton $width={48} $on aria-label="Thin lines"><ThinLinesIcon /></QuickButton>
      <QuickDivider $tight />
      <QuickButton $after={16} aria-label="Close hidden windows"><CloseHiddenIcon /></QuickButton>
      <QuickButton aria-label="Switch windows"><SwitchWindowsIcon /></QuickButton>
      <QuickCaret width={32} name="Window list" />
      <QuickButton aria-label="Customize toolbar"><CustomizeIcon /></QuickButton>
    </QuickAccess>
  );
}

const tabs = [
  'Structure',
  'Systems',
  'Insert',
  'Annotate',
  'Analyze',
  'Massing & Site',
  'Collaborate',
  'View',
  'Manage',
  'Add-Ins',
];

export default function App() {
  const [attach, setAttach] = useState('Base');

  return (
    <Page>
      <GlobalStyle />
      <Gradients />
      <TopRow>
        <QuickAccessBar />
        <WindowTitle>
          <span>Autodesk Revit 2016 -</span>
          <span>Project1 - 3D View: {'{3D}'}</span>
        </WindowTitle>
      </TopRow>
      <TabBar>
        <Tab $clipped>Architecture</Tab>
        {tabs.map((name) => (
          <Tab key={name}>{name}</Tab>
        ))}
        <Tab $active>Modify | Walls</Tab>
        <CollapseButton aria-label="Minimize ribbon">
          <Icon w={30} h={18}>
            <rect x="1" y="1" width="28" height="16" rx="4" fill="#eef0f4" stroke="#3b424e" strokeWidth="2" />
            <path d="M10 11h10l-5-5z" fill="#3b424e" />
          </Icon>
          <Caret color="#111" />
        </CollapseButton>
      </TabBar>
      <Ribbon>
        <Panel title="Properties" width={66} left={0} clipped>
          <LargeGrid $columns={1} $after={32}>
            <button aria-label="Properties"><PropertiesIcon /></button>
            <button aria-label="Type properties"><TypePropertiesIcon /></button>
          </LargeGrid>
        </Panel>
        <Panel title="Clipboard" width={158} left={20}>
          <LabelButton $width={70} $after={24}>
            <PasteIcon />
            <span>Paste</span>
            <Caret />
          </LabelButton>
          <SmallColumn>
            <ToolButton aria-label="Cut to clipboard" disabled><ScissorsIcon /></ToolButton>
            <ToolButton aria-label="Copy to clipboard" disabled><CopyIcon /></ToolButton>
            <ToolButton aria-label="Match type"><MatchIcon /></ToolButton>
          </SmallColumn>
        </Panel>
        <Panel title="Geometry" width={276} left={14}>
          <SmallColumn $width={142}>
            <ToolButton><CopeIcon /><span>Cope</span><Caret /></ToolButton>
            <ToolButton><CutIcon /><span>Cut</span><Caret /></ToolButton>
            <ToolButton><JoinIcon /><span>Join</span><Caret /></ToolButton>
          </SmallColumn>
          <SmallColumn $after={18}>
            <ToolButton aria-label="Unjoin" disabled><UnjoinIcon /></ToolButton>
            <ToolButton aria-label="Beam joins"><BeamJoinIcon /></ToolButton>
            <ToolButton aria-label="Wall joins"><WallJoinIcon /></ToolButton>
          </SmallColumn>
          <SmallColumn $width={56}>
            <ToolButton aria-label="Split face"><SplitFaceIcon /></ToolButton>
            <ToolButton aria-label="Paint" $gap={14}><PaintIcon /><Caret /></ToolButton>
            <ToolButton aria-label="Demolish"><HammerIcon /></ToolButton>
          </SmallColumn>
        </Panel>
        <Panel title="Modify" width={474} left={14}>
          <LargeGrid $columns={4} $gap={18} $after={22}>
            <button aria-label="Align"><AlignIcon /></button>
            <button aria-label="Offset"><OffsetIcon /></button>
            <button aria-label="Mirror, pick axis"><MirrorPickIcon /></button>
            <button aria-label="Mirror, draw axis"><MirrorDrawIcon /></button>
            <button aria-label="Move"><MoveIcon /></button>
            <button aria-label="Copy"><CopyElementIcon /></button>
            <button aria-label="Rotate"><RotateIcon /></button>
            <button aria-label="Trim to corner"><TrimCornerIcon /></button>
          </LargeGrid>
          <SmallColumn $after={18}>
            <ToolButton aria-label="Split element"><SplitIcon /></ToolButton>
            <ToolButton aria-label="Array"><ArrayIcon /></ToolButton>
            <ToolButton aria-label="Extend one element"><ExtendIcon /></ToolButton>
          </SmallColumn>
          <SmallColumn $after={18}>
            <ToolButton aria-label="Split with gap"><SplitIcon gap /></ToolButton>
            <ToolButton aria-label="Scale"><ScaleIcon /></ToolButton>
            <ToolButton aria-label="Extend many elements"><ExtendIcon many /></ToolButton>
          </SmallColumn>
          <SmallColumn>
            <ToolButton aria-label="Unpin"><UnpinIcon /></ToolButton>
            <ToolButton aria-label="Pin"><PinIcon /></ToolButton>
            <ToolButton aria-label="Delete"><DeleteIcon /></ToolButton>
          </SmallColumn>
        </Panel>
        <Panel title="View" width={128} left={14}>
          <SmallColumn $width={52} $after={18}>
            <ToolButton aria-label="Hide in view"><BulbIcon /><Caret color="#777" /></ToolButton>
            <ToolButton aria-label="Override graphics"><BrushIcon /><Caret color="#777" /></ToolButton>
            <ToolButton aria-label="Selection box" disabled><SectionBoxIcon /></ToolButton>
          </SmallColumn>
          <SmallColumn>
            <ToolButton aria-label="Displace elements" disabled><DisplaceIcon /></ToolButton>
            <ToolButton aria-label="Linework"><LineworkIcon /></ToolButton>
          </SmallColumn>
        </Panel>
        <Panel title="Measure" width={110} left={14}>
          <WideColumn>
            <WideButton aria-label="Measure between"><MeasureIcon /><Caret color="#666" /></WideButton>
            <WideButton aria-label="Aligned dimension"><AlignedDimensionIcon /><Caret /></WideButton>
          </WideColumn>
        </Panel>
        <Panel title="Create" width={162} left={14} after={6}>
          <LargeGrid $columns={2}>
            <button aria-label="Create group" disabled><GroupIcon /></button>
            <button aria-label="Create similar" disabled><CreateSimilarIcon /></button>
            <button aria-label="Create assembly"><AssemblyIcon /></button>
            <button aria-label="Create parts" disabled><PartsIcon /></button>
          </LargeGrid>
        </Panel>
        <Panel title="Mode" width={168} left={4} context>
          <LabelButton $width={80} disabled>
            <EditProfileIcon />
            <span>Edit</span>
            <span>Profile</span>
          </LabelButton>
          <LabelButton $width={80} disabled>
            <ResetProfileIcon />
            <span>Reset</span>
            <span>Profile</span>
          </LabelButton>
        </Panel>
        <Panel title="Modify Wall" width={334} left={4} context>
          <LabelButton $width={108} disabled>
            <OpeningIcon />
            <span>Wall</span>
            <span>Opening</span>
          </LabelButton>
          <LabelButton $width={108} disabled>
            <AttachIcon />
            <span>Attach</span>
            <span>Top/Base</span>
          </LabelButton>
          <LabelButton $width={108} disabled>
            <DetachIcon />
            <span>Detach</span>
            <span>Top/Base</span>
          </LabelButton>
        </Panel>
      </Ribbon>
      <OptionsBar>
        <OptionsDivider />
        <OptionsLabel>Attach Wall:</OptionsLabel>
        {['Top', 'Base'].map((side) => (
          <RadioLabel key={side}>
            <input
              type="radio"
              name="attach"
              value={side}
              checked={attach === side}
              onChange={() => setAttach(side)}
            />
            {side}
          </RadioLabel>
        ))}
      </OptionsBar>
      <Scene viewBox="0 322 1920 758" role="img" aria-label="Wall in 3D view" shapeRendering="crispEdges">
        <path d="m681 556 108 15 358 262-109-14z" fill="#808080" />
        <path d="m790 449 358 260v125L790 573z" fill="#263a66" />
        <path d="M792 572 1147 833M789 450v122M793 450v122" stroke="#001f66" strokeWidth="2" />
        <path d="m791 448 357 260" stroke="#003cc4" strokeWidth="5" fill="none" />
        <path d="m793 450 355 259" stroke="#4f82dc" strokeWidth="1" fill="none" />
        <path d="M1148 708v127" stroke="#003cc4" strokeWidth="3" />
      </Scene>
      <Markup viewBox="0 0 1920 1080" fill="none" stroke="#f00" aria-hidden="true">
        <rect x="1670" y="77" width="120" height="149" strokeWidth="4" />
        <path d="M1669 211C1550 305 1300 414 1022 414 780 414 560 385 367 322" strokeWidth="4" />
        <path d="M438 324 368 321 426 357" strokeWidth="5" />
      </Markup>
    </Page>
  );
}
